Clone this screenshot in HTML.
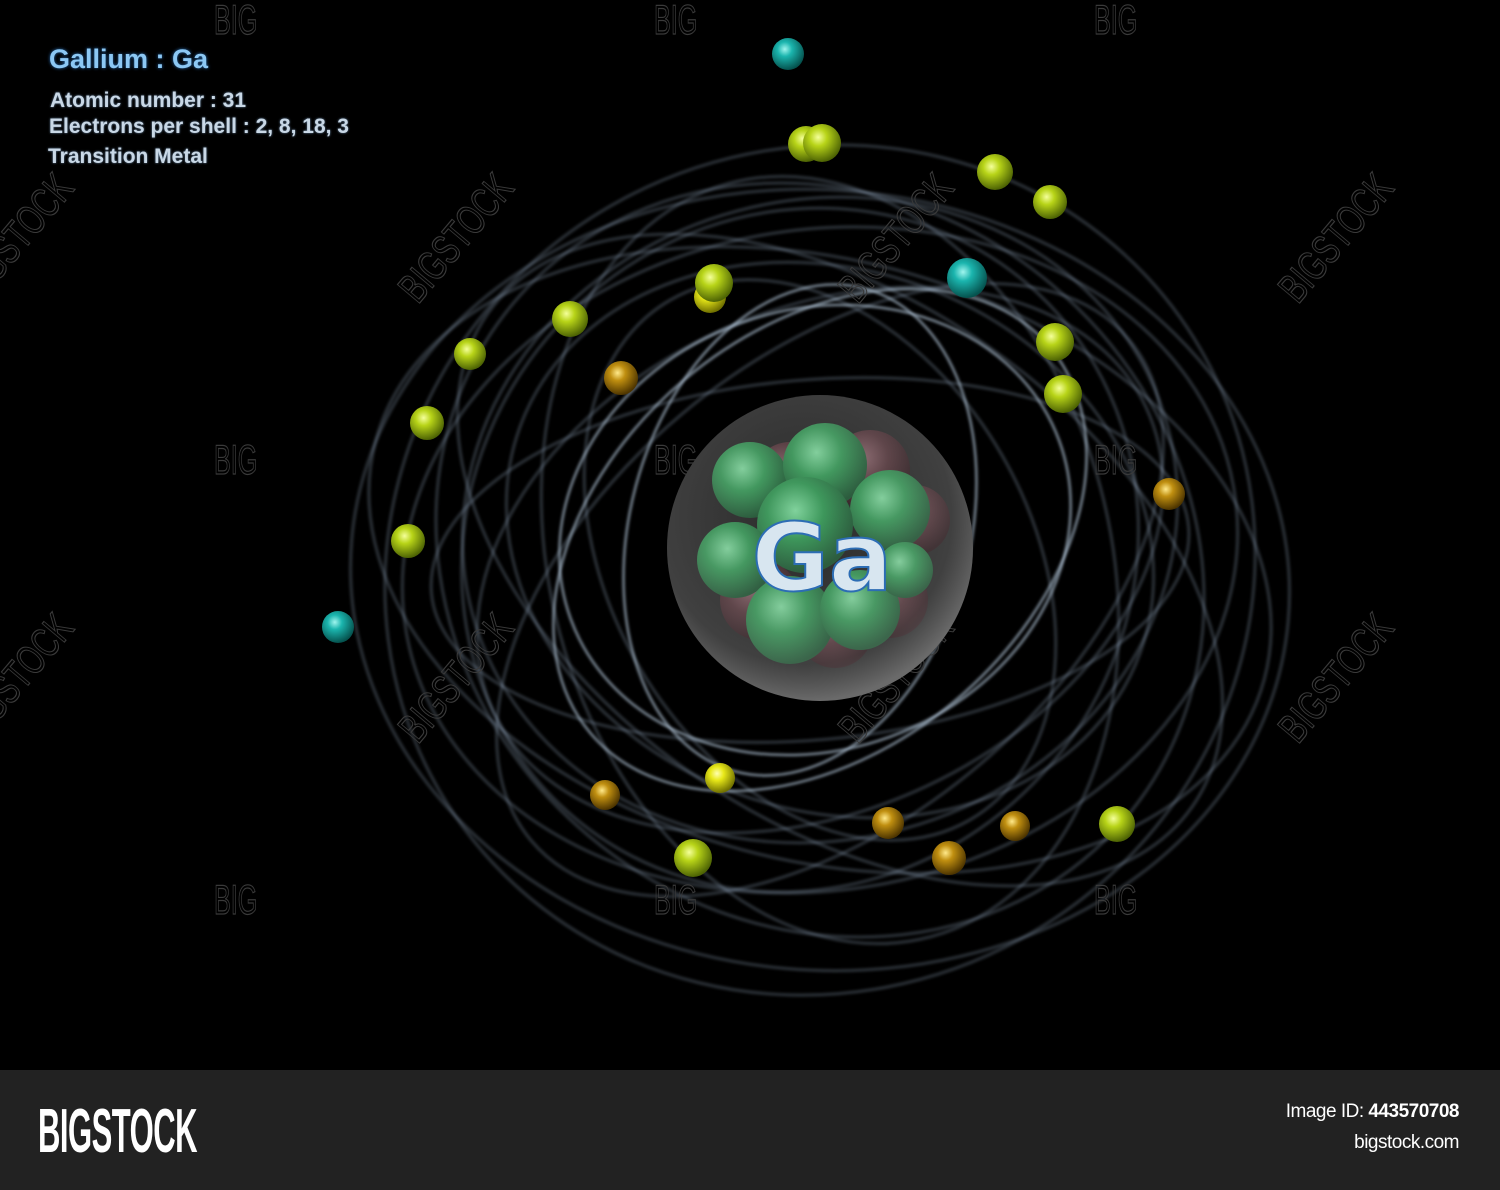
<!DOCTYPE html>
<html><head><meta charset="utf-8"><style>
html,body{margin:0;padding:0;background:#000;width:1500px;height:1190px;overflow:hidden;font-family:"Liberation Sans",sans-serif}
.t{position:absolute;color:#c9d8e6;font-weight:bold;font-size:21px;text-shadow:0 0 2px #6a88a8;white-space:nowrap}
.bar{position:absolute;left:0;top:1070px;width:1500px;height:120px;background:#222}
</style></head><body>
<svg width="1500" height="1070" style="position:absolute;left:0;top:0">
<defs>
<radialGradient id="yg" cx="40%" cy="35%" r="65%"><stop offset="0" stop-color="#f4ff9a"/><stop offset=".35" stop-color="#b8d418"/><stop offset="1" stop-color="#4e6404"/></radialGradient>
<radialGradient id="tl" cx="40%" cy="35%" r="65%"><stop offset="0" stop-color="#9ff5ee"/><stop offset=".35" stop-color="#1bb5ae"/><stop offset="1" stop-color="#05524e"/></radialGradient>
<radialGradient id="gd" cx="40%" cy="35%" r="65%"><stop offset="0" stop-color="#ffe98a"/><stop offset=".35" stop-color="#c08f10"/><stop offset="1" stop-color="#4e3500"/></radialGradient>
<radialGradient id="ye" cx="40%" cy="35%" r="65%"><stop offset="0" stop-color="#ffffb0"/><stop offset=".35" stop-color="#e8e818"/><stop offset="1" stop-color="#707000"/></radialGradient>
<radialGradient id="gr" cx="40%" cy="35%" r="65%"><stop offset="0" stop-color="#7fe0a0"/><stop offset=".45" stop-color="#2e9a52"/><stop offset="1" stop-color="#14502a"/></radialGradient>
<radialGradient id="br" cx="40%" cy="35%" r="65%"><stop offset="0" stop-color="#8a6068"/><stop offset=".5" stop-color="#4c2a30"/><stop offset="1" stop-color="#200c10"/></radialGradient>
<radialGradient id="sh" cx="45%" cy="40%" r="60%"><stop offset="0" stop-color="#888" stop-opacity=".15"/><stop offset=".8" stop-color="#999" stop-opacity=".3"/><stop offset="1" stop-color="#ccc" stop-opacity=".45"/></radialGradient>
<filter id="bl"><feGaussianBlur stdDeviation="1.2"/></filter>
</defs>
<g fill="none" stroke="#9fb4cc" stroke-opacity=".24" stroke-width="3.5" filter="url(#bl)">
<ellipse cx="820" cy="560" rx="420" ry="330" transform="rotate(-10 820 560)"/>
<ellipse cx="820" cy="560" rx="460" ry="300" transform="rotate(15 820 560)"/>
<ellipse cx="820" cy="560" rx="400" ry="360" transform="rotate(40 820 560)"/>
<ellipse cx="820" cy="570" rx="440" ry="420" transform="rotate(-30 820 570)"/>
<ellipse cx="820" cy="560" rx="360" ry="250" transform="rotate(-25 820 560)"/>
<ellipse cx="830" cy="540" rx="330" ry="270" transform="rotate(20 830 540)"/>
<ellipse cx="820" cy="560" rx="300" ry="210" transform="rotate(60 820 560)"/>
<ellipse cx="810" cy="560" rx="380" ry="180" transform="rotate(-5 810 560)"/>
<ellipse cx="820" cy="580" rx="470" ry="390" transform="rotate(5 820 580)"/>
<ellipse cx="830" cy="560" rx="280" ry="390" transform="rotate(-15 830 560)"/>
<ellipse cx="840" cy="560" rx="430" ry="260" transform="rotate(35 840 560)"/>
<ellipse cx="800" cy="550" rx="350" ry="330" transform="rotate(-50 800 550)"/>
<ellipse cx="830" cy="590" rx="390" ry="230" transform="rotate(-40 830 590)"/>
<ellipse cx="820" cy="520" rx="320" ry="360" transform="rotate(75 820 520)"/>
</g>
<g fill="none" stroke="#b8cce0" stroke-opacity=".55" stroke-width="3" filter="url(#bl)">
<ellipse cx="800" cy="530" rx="170" ry="250" transform="rotate(15 800 530)"/>
<ellipse cx="815" cy="530" rx="260" ry="220" transform="rotate(-20 815 530)"/>
<ellipse cx="820" cy="540" rx="210" ry="300" transform="rotate(50 820 540)"/>
</g>
<g font-family="Liberation Sans,sans-serif" font-size="42" fill="none" stroke="#3a3a3a" stroke-width="1.2">
<g transform="translate(214 34) scale(.6 1)"><text>BIG</text></g>
<g transform="translate(654 34) scale(.6 1)"><text>BIG</text></g>
<g transform="translate(1094 34) scale(.6 1)"><text>BIG</text></g>
<g transform="translate(214 474) scale(.6 1)"><text>BIG</text></g>
<g transform="translate(654 474) scale(.6 1)"><text>BIG</text></g>
<g transform="translate(1094 474) scale(.6 1)"><text>BIG</text></g>
<g transform="translate(214 914) scale(.6 1)"><text>BIG</text></g>
<g transform="translate(654 914) scale(.6 1)"><text>BIG</text></g>
<g transform="translate(1094 914) scale(.6 1)"><text>BIG</text></g>
<g transform="translate(418 305) rotate(-50) scale(.7 1)"><text>BIGSTOCK</text></g>
<g transform="translate(858 305) rotate(-50) scale(.7 1)"><text>BIGSTOCK</text></g>
<g transform="translate(1298 305) rotate(-50) scale(.7 1)"><text>BIGSTOCK</text></g>
<g transform="translate(418 745) rotate(-50) scale(.7 1)"><text>BIGSTOCK</text></g>
<g transform="translate(858 745) rotate(-50) scale(.7 1)"><text>BIGSTOCK</text></g>
<g transform="translate(1298 745) rotate(-50) scale(.7 1)"><text>BIGSTOCK</text></g>
<g transform="translate(-22 305) rotate(-50) scale(.7 1)"><text>BIGSTOCK</text></g>
<g transform="translate(-22 745) rotate(-50) scale(.7 1)"><text>BIGSTOCK</text></g>
</g>
<g>
<circle cx="820" cy="548" r="153" fill="#1a1a1a"/>
<circle cx="790" cy="480" r="38" fill="url(#br)"/><circle cx="870" cy="470" r="40" fill="url(#br)"/>
<circle cx="915" cy="520" r="35" fill="url(#br)"/><circle cx="760" cy="600" r="40" fill="url(#br)"/>
<circle cx="890" cy="600" r="38" fill="url(#br)"/><circle cx="835" cy="630" r="38" fill="url(#br)"/>
<circle cx="750" cy="480" r="38" fill="url(#gr)"/><circle cx="825" cy="465" r="42" fill="url(#gr)"/>
<circle cx="890" cy="510" r="40" fill="url(#gr)"/><circle cx="805" cy="525" r="48" fill="url(#gr)"/>
<circle cx="735" cy="560" r="38" fill="url(#gr)"/><circle cx="790" cy="620" r="44" fill="url(#gr)"/>
<circle cx="860" cy="610" r="40" fill="url(#gr)"/><circle cx="905" cy="570" r="28" fill="url(#gr)"/>
<circle cx="820" cy="548" r="153" fill="url(#sh)"/>
<text x="822" y="590" text-anchor="middle" font-family="DejaVu Sans,sans-serif" font-weight="bold" font-size="94" fill="#d8e6f0" stroke="#2c6db4" stroke-width="2">Ga</text>
</g>
<g>
<circle cx="570" cy="319" r="18" fill="url(#yg)"/><circle cx="470" cy="354" r="16" fill="url(#yg)"/>
<circle cx="427" cy="423" r="17" fill="url(#yg)"/><circle cx="408" cy="541" r="17" fill="url(#yg)"/>
<circle cx="710" cy="297" r="16" fill="url(#ye)"/><circle cx="714" cy="283" r="19" fill="url(#yg)"/>
<circle cx="806" cy="144" r="18" fill="url(#yg)"/><circle cx="822" cy="143" r="19" fill="url(#yg)"/>
<circle cx="995" cy="172" r="18" fill="url(#yg)"/><circle cx="1050" cy="202" r="17" fill="url(#yg)"/>
<circle cx="1055" cy="342" r="19" fill="url(#yg)"/><circle cx="1063" cy="394" r="19" fill="url(#yg)"/>
<circle cx="693" cy="858" r="19" fill="url(#yg)"/><circle cx="1117" cy="824" r="18" fill="url(#yg)"/>
<circle cx="788" cy="54" r="16" fill="url(#tl)"/><circle cx="967" cy="278" r="20" fill="url(#tl)"/>
<circle cx="338" cy="627" r="16" fill="url(#tl)"/>
<circle cx="621" cy="378" r="17" fill="url(#gd)"/><circle cx="1169" cy="494" r="16" fill="url(#gd)"/>
<circle cx="605" cy="795" r="15" fill="url(#gd)"/><circle cx="888" cy="823" r="16" fill="url(#gd)"/>
<circle cx="1015" cy="826" r="15" fill="url(#gd)"/><circle cx="949" cy="858" r="17" fill="url(#gd)"/>
<circle cx="720" cy="778" r="15" fill="url(#ye)"/>
</g>
</svg>
<div class="t" style="left:49px;top:44px;font-size:27px;color:#8cc8f4;text-shadow:0 0 3px #2a70b8">Gallium : Ga</div>
<div class="t" style="left:50px;top:89px">Atomic number : 31</div>
<div class="t" style="left:49px;top:115px">Electrons per shell : 2, 8, 18, 3</div>
<div class="t" style="left:48px;top:145px">Transition Metal</div>
<div class="bar">
<div style="position:absolute;left:38px;top:26px;color:#fff;font-size:62px;font-weight:bold;transform:scaleX(.5);transform-origin:left;letter-spacing:-1px;font-family:'Liberation Sans',sans-serif">BIGSTOCK</div>
<div style="position:absolute;right:41px;top:31px;color:#fff;font-size:19px;letter-spacing:-.5px">Image ID: <b>443570708</b></div>
<div style="position:absolute;right:41px;top:62px;color:#fff;font-size:19px;letter-spacing:-.5px">bigstock.com</div>
</div>
</body></html>
